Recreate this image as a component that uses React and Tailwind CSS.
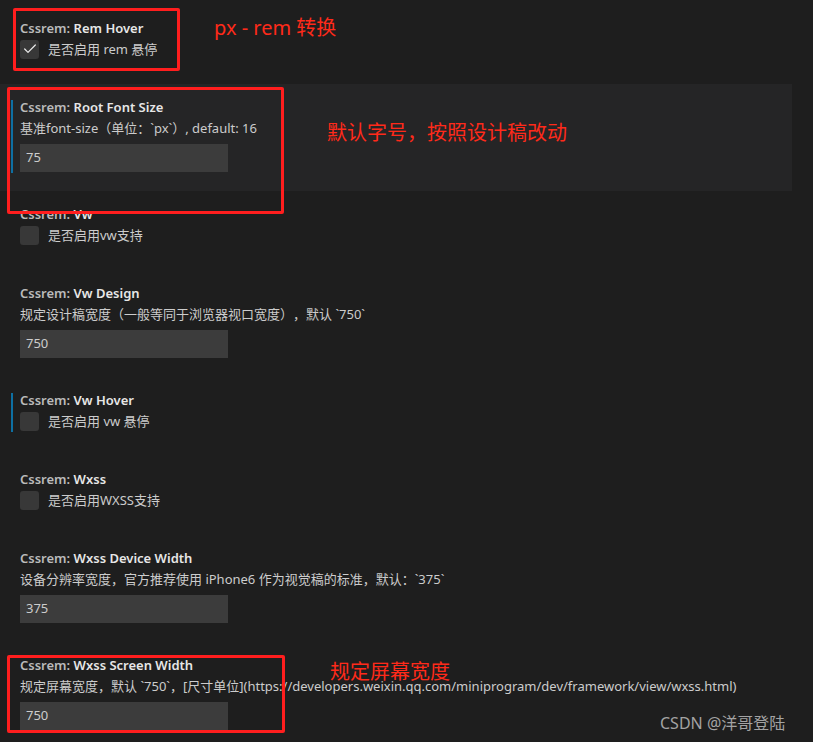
import { Check } from "lucide-react";

const FONT = { fontFamily: '"Noto Sans", "Noto Sans CJK SC", sans-serif' };

const settings = [
  { name: "Rem Hover", type: "bool", checked: true, desc: "是否启用 rem 悬停" },
  { name: "Root Font Size", type: "text", desc: "基准font-size（单位：`px`）, default: 16", value: "75", focus: true, bar: "h-[73px]" },
  { name: "Vw", type: "bool", desc: "是否启用vw支持" },
  { name: "Vw Design", type: "text", desc: "规定设计稿宽度（一般等同于浏览器视口宽度），默认 `750`", value: "750" },
  { name: "Vw Hover", type: "bool", desc: "是否启用 vw 悬停", bar: "h-[39px]" },
  { name: "Wxss", type: "bool", desc: "是否启用WXSS支持" },
  { name: "Wxss Device Width", type: "text", desc: "设备分辨率宽度，官方推荐使用 iPhone6 作为视觉稿的标准，默认：`375`", value: "375" },
  {
    name: "Wxss Screen Width",
    type: "text",
    desc: "规定屏幕宽度，默认 `750`，[尺寸单位](https://developers.weixin.qq.com/miniprogram/dev/framework/view/wxss.html)",
    value: "750",
  },
];

// 一条设置项
const Row = ({ s }) => (
  <div className={`relative pl-5 pt-[13px] ${s.type === "bool" ? "h-[79px]" : "h-[107px]"} ${s.focus ? "bg-[#252526]" : ""}`}>
    {s.bar && <div className={`absolute left-[11px] top-4 w-[2px] bg-[#0e70a3] ${s.bar}`} />}
    <div className="h-5 whitespace-nowrap text-[13px] font-semibold leading-5">
      <span className="text-[#bbbbbb]">Cssrem: </span>
      <span className="text-[#e7e7e7]">{s.name}</span>
    </div>
    <div className="pt-px">
      {s.type === "bool" ? (
        <div className="flex h-5 items-center gap-[9px] text-[13px] text-[#cccccc]">
          <div className="flex size-[19px] items-center justify-center rounded-[3px] bg-[#383838]">
            {s.checked && <Check className="size-4 text-[#ececec]" strokeWidth={1.8} />}
          </div>
          <span className="whitespace-nowrap leading-5">{s.desc}</span>
        </div>
      ) : (
        <>
          <div className="h-5 whitespace-nowrap text-[13px] leading-5 text-[#cccccc]">{s.desc}</div>
          <div className="mt-[6px] flex h-[28px] w-[208px] items-center bg-[#3c3c3c] pl-[6px] text-[13px] text-[#cccccc]">{s.value}</div>
        </>
      )}
    </div>
  </div>
);

export default function App() {
  return (
    <div className="relative h-[742px] w-[813px] overflow-hidden bg-[#1e1e1e] [text-spacing-trim:space-all]" style={FONT}>
      <div className="pr-[21px] pt-[5px]">
        {settings.map((s) => <Row key={s.name} s={s} />)}
      </div>

      {/* 标注框 */}
      <div className="absolute left-[13px] top-[8px] h-[63px] w-[167px] rounded-[2px] border-[3px] border-[#ff1e1e]" />
      <div className="absolute left-[7px] top-[87px] h-[127px] w-[277px] rounded-[2px] border-[3px] border-[#ff1e1e]" />
      <div className="absolute left-[7px] top-[655px] h-[78px] w-[278px] rounded-[2px] border-[3px] border-[#ff1e1e]" />

      <div className="absolute left-[214px] top-[14px] text-[20px] leading-7 text-[#ff2a1a]">px - rem 转换</div>
      <div className="absolute left-[327px] top-[119px] text-[20px] leading-7 text-[#ff2a1a]">默认字号，按照设计稿改动</div>
      <div className="absolute left-[330px] top-[658px] text-[20px] leading-7 text-[#ff2a1a]">规定屏幕宽度</div>

      <div className="absolute left-[660px] top-[711px] text-[16px] leading-6 text-[#a3a3a3]">CSDN @洋哥登陆</div>
    </div>
  );
}
